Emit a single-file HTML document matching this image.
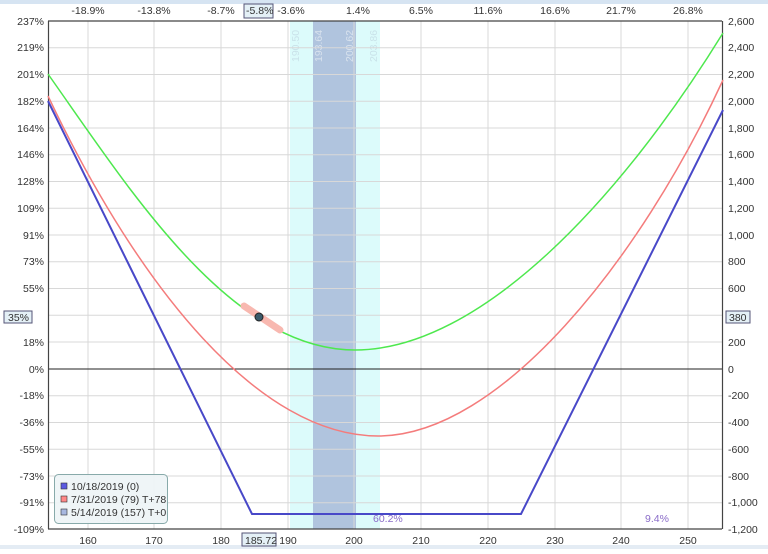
<!DOCTYPE html>
<html><head><meta charset="utf-8"><style>
body{margin:0;width:768px;height:549px;overflow:hidden;background:#fff;font-family:"Liberation Sans",sans-serif;}
svg text{font-family:"Liberation Sans",sans-serif;font-size:10.5px;fill:#333;}
</style></head><body>
<svg width="768" height="549" xmlns="http://www.w3.org/2000/svg">
<rect x="0" y="0" width="768" height="4" fill="#d6e4f2"/>
<rect x="0" y="545" width="768" height="4" fill="#e4ecf4"/>
<!-- shading -->
<rect x="290" y="21" width="23" height="508" fill="#dcfbfb"/>
<rect x="356" y="21" width="24" height="508" fill="#dcfbfb"/>
<rect x="313" y="21" width="43" height="508" fill="#b0c4de"/>
<g fill="#fff" opacity="0.9" font-size="10">
<text transform="translate(299,62) rotate(-90)" style="fill:#c8e0e8">190.50</text>
<text transform="translate(322,62) rotate(-90)" style="fill:#dde6f0">193.64</text>
<text transform="translate(353,62) rotate(-90)" style="fill:#dde6f0">200.62</text>
<text transform="translate(377,62) rotate(-90)" style="fill:#c8e0e8">203.86</text>
</g>
<!-- grid -->
<g stroke="#d8d8d8" stroke-width="1">
<line x1="88" y1="21" x2="88" y2="529"/><line x1="154" y1="21" x2="154" y2="529"/>
<line x1="221" y1="21" x2="221" y2="529"/><line x1="288" y1="21" x2="288" y2="529"/>
<line x1="354" y1="21" x2="354" y2="529"/><line x1="421" y1="21" x2="421" y2="529"/>
<line x1="488" y1="21" x2="488" y2="529"/><line x1="555" y1="21" x2="555" y2="529"/>
<line x1="621" y1="21" x2="621" y2="529"/><line x1="688" y1="21" x2="688" y2="529"/>
<line x1="48" y1="47.7" x2="722" y2="47.7"/><line x1="48" y1="74.5" x2="722" y2="74.5"/>
<line x1="48" y1="101.2" x2="722" y2="101.2"/><line x1="48" y1="128" x2="722" y2="128"/>
<line x1="48" y1="154.7" x2="722" y2="154.7"/><line x1="48" y1="181.5" x2="722" y2="181.5"/>
<line x1="48" y1="208.2" x2="722" y2="208.2"/><line x1="48" y1="235" x2="722" y2="235"/>
<line x1="48" y1="261.7" x2="722" y2="261.7"/><line x1="48" y1="288.5" x2="722" y2="288.5"/>
<line x1="48" y1="315.2" x2="722" y2="315.2"/><line x1="48" y1="342" x2="722" y2="342"/>
<line x1="48" y1="395.7" x2="722" y2="395.7"/><line x1="48" y1="422.5" x2="722" y2="422.5"/>
<line x1="48" y1="449.2" x2="722" y2="449.2"/><line x1="48" y1="476" x2="722" y2="476"/>
<line x1="48" y1="502.7" x2="722" y2="502.7"/>
</g>
<line x1="48" y1="369" x2="722" y2="369" stroke="#222" stroke-width="1"/>
<!-- axes -->
<g stroke="#444" stroke-width="1.2" fill="none">
<line x1="48.5" y1="21" x2="48.5" y2="529"/>
<line x1="722.5" y1="21" x2="722.5" y2="529"/>
<line x1="48" y1="21" x2="722" y2="21"/>
<line x1="48" y1="529" x2="722" y2="529"/>
</g>
<!-- curves -->
<path d="M48,74 C130,190 230,350 355,350 C480,350 620,200 723,33" stroke="#4ee84e" stroke-width="1.5" fill="none"/>
<path d="M48,96 C140,290 260,436 378,436 C500,436 640,260 723,80" stroke="#f47c7c" stroke-width="1.5" fill="none"/>
<path d="M48,101 L252,514 L521,514 L723,110" stroke="#4848c8" stroke-width="2" fill="none"/>
<line x1="244" y1="306" x2="280" y2="330" stroke="#f8b8b0" stroke-width="7" stroke-linecap="round"/>
<circle cx="259" cy="317" r="4" fill="#3a5a6a" stroke="#222"/>
<!-- left labels -->
<g text-anchor="end">
<text x="44" y="25">237%</text><text x="44" y="51">219%</text><text x="44" y="78">201%</text>
<text x="44" y="105">182%</text><text x="44" y="132">164%</text><text x="44" y="158">146%</text>
<text x="44" y="185">128%</text><text x="44" y="212">109%</text><text x="44" y="239">91%</text>
<text x="44" y="265">73%</text><text x="44" y="292">55%</text>
<text x="44" y="346">18%</text><text x="44" y="373">0%</text><text x="44" y="399">-18%</text>
<text x="44" y="426">-36%</text><text x="44" y="453">-55%</text><text x="44" y="480">-73%</text>
<text x="44" y="506">-91%</text><text x="44" y="533">-109%</text>
</g>
<rect x="4" y="311" width="28" height="12" fill="#e4f0f6" stroke="#557"/>
<text x="8" y="321">35%</text>
<!-- right labels -->
<g>
<text x="728" y="25">2,600</text><text x="728" y="51">2,400</text><text x="728" y="78">2,200</text>
<text x="728" y="105">2,000</text><text x="728" y="132">1,800</text><text x="728" y="158">1,600</text>
<text x="728" y="185">1,400</text><text x="728" y="212">1,200</text><text x="728" y="239">1,000</text>
<text x="728" y="265">800</text><text x="728" y="292">600</text>
<text x="728" y="346">200</text><text x="728" y="373">0</text><text x="728" y="399">-200</text>
<text x="728" y="426">-400</text><text x="728" y="453">-600</text><text x="728" y="480">-800</text>
<text x="728" y="506">-1,000</text><text x="728" y="533">-1,200</text>
</g>
<rect x="726" y="311" width="24" height="12" fill="#e4f0f6" stroke="#557"/>
<text x="729" y="321">380</text>
<!-- top labels -->
<g text-anchor="middle">
<text x="88" y="14">-18.9%</text><text x="154" y="14">-13.8%</text><text x="221" y="14">-8.7%</text>
<text x="291" y="14">-3.6%</text><text x="358" y="14">1.4%</text><text x="421" y="14">6.5%</text>
<text x="488" y="14">11.6%</text><text x="555" y="14">16.6%</text><text x="621" y="14">21.7%</text>
<text x="688" y="14">26.8%</text>
</g>
<rect x="244" y="4" width="29" height="14" fill="#e4f0f6" stroke="#557"/>
<text x="246" y="14">-5.8%</text>
<!-- bottom labels -->
<g text-anchor="middle">
<text x="88" y="544">160</text><text x="154" y="544">170</text><text x="221" y="544">180</text>
<text x="288" y="544">190</text><text x="354" y="544">200</text><text x="421" y="544">210</text>
<text x="488" y="544">220</text><text x="555" y="544">230</text><text x="621" y="544">240</text>
<text x="688" y="544">250</text>
</g>
<rect x="242" y="533" width="34" height="13" fill="#e4f0f6" stroke="#557"/>
<text x="245" y="544">185.72</text>
<text x="373" y="522" style="fill:#8a6cc8">60.2%</text>
<text x="645" y="522" style="fill:#8a6cc8">9.4%</text>
<text x="100" y="522" style="fill:#b0b8c8">40.4%</text>
<!-- legend -->
<rect x="54.5" y="474.5" width="113" height="49" rx="4" fill="#eef4f6" fill-opacity="0.92" stroke="#8aa"/>
<rect x="61" y="483" width="6" height="6" fill="#5a5ae0" stroke="#333" stroke-width="0.6"/>
<text x="71" y="490">10/18/2019 (0)</text>
<rect x="61" y="496" width="6" height="6" fill="#f88" stroke="#333" stroke-width="0.6"/>
<text x="71" y="503">7/31/2019 (79) T+78</text>
<rect x="61" y="509" width="6" height="6" fill="#a8b8e0" stroke="#333" stroke-width="0.6"/>
<text x="71" y="516">5/14/2019 (157) T+0</text>
</svg>
</body></html>
